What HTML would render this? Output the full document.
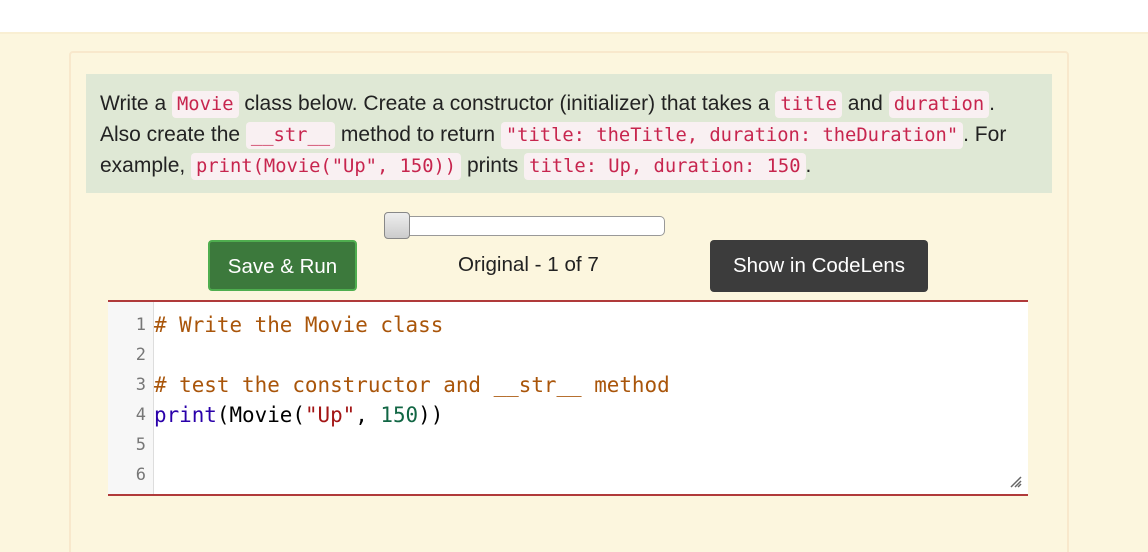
<!DOCTYPE html>
<html><head><style>
html,body{margin:0;width:1148px;height:552px;overflow:hidden}
body{background:#fff;font-family:"Liberation Sans",Arial,sans-serif;position:relative}
.bg{position:absolute;top:32px;left:0;right:0;bottom:0;background:#fcf6de;border-top:2px solid #f9efd3}
.card{position:absolute;left:69px;top:51px;width:996px;height:520px;border:2px solid #f8e8cc;border-radius:4px;background:#fcf6de}
.desc{position:absolute;left:86px;top:74px;width:966px;height:119px;background:#dfe8d5;box-sizing:border-box;padding:15px 14px;font-size:21px;line-height:30px;color:#222;white-space:nowrap}
code{font-family:"DejaVu Sans Mono","Liberation Mono",monospace;font-size:18.8px;color:#c7254e;background:#f9f0f2;border-radius:4px;padding:3px 5px}
.slider{position:absolute;left:385px;top:216px;width:278px;height:18px;border:1px solid #999;border-radius:5px;background:#fff}
.thumb{position:absolute;left:384px;top:212px;width:24px;height:25px;border:1px solid #888;border-radius:4px;background:linear-gradient(#eee,#ccc)}
.btn{position:absolute;color:#fff;font-size:20.5px;text-align:center;border-radius:4px;box-sizing:border-box}
.save{left:208px;top:240px;width:149px;height:51px;line-height:49px;background:#3c793c;border:2px solid #4fae4f}
.show{left:710px;top:240px;width:218px;height:52px;line-height:52px;background:#3c3c3c}
.orig{position:absolute;left:458px;top:253px;font-size:20.6px;color:#222}
.ed{position:absolute;left:108px;top:300px;width:920px;height:196px;background:#fff;border-top:2px solid #b03a3a;border-bottom:2px solid #b03a3a;box-sizing:border-box}
.gut{position:absolute;left:0;top:0;width:45px;height:192px;background:#f7f7f7;border-right:1px solid #ddd}
.ln{position:absolute;font-family:"DejaVu Sans Mono","Liberation Mono",monospace;line-height:30px;white-space:pre}
.num{left:0;width:38px;text-align:right;color:#777;font-size:17px}
.cd{left:46px;font-size:20.9px}
.cm{color:#a9550a}
</style></head><body>
<div class="bg"></div>
<div class="card"></div>
<div class="desc">Write a <code>Movie</code> class below. Create a constructor (initializer) that takes a <code>title</code> and <code>duration</code>.<br>Also create the <code>__str__</code> method to return <code>"title: theTitle, duration: theDuration"</code>. For<br>example, <code>print(Movie("Up", 150))</code> prints <code>title: Up, duration: 150</code>.</div>
<div class="slider"></div><div class="thumb"></div>
<div class="btn save">Save &amp; Run</div>
<div class="orig">Original - 1 of 7</div>
<div class="btn show">Show in CodeLens</div>
<div class="ed">
<div class="gut"></div>
<div class="ln num" style="top:8px">1</div>
<div class="ln num" style="top:38px">2</div>
<div class="ln num" style="top:68px">3</div>
<div class="ln num" style="top:98px">4</div>
<div class="ln num" style="top:128px">5</div>
<div class="ln num" style="top:158px">6</div>
<div class="ln cd cm" style="top:8px"># Write the Movie class</div>
<div class="ln cd cm" style="top:68px"># test the constructor and __str__ method</div>
<div class="ln cd" style="top:98px"><span style="color:#2a00aa">print</span>(Movie(<span style="color:#a31515">"Up"</span>, <span style="color:#116644">150</span>))</div>
<svg style="position:absolute;left:902px;top:174px" width="12" height="12"><path d="M11 1L1 11M11 5L5 11M11 8L8 11" stroke="#666" stroke-width="1.5"/></svg>
</div>
</body></html>
